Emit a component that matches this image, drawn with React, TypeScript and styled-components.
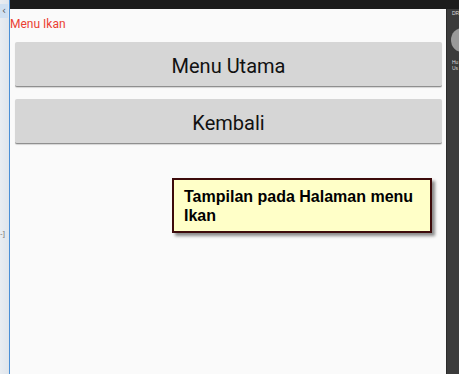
import React from "react";
import styled, { createGlobalStyle } from "styled-components";

const Global = createGlobalStyle`
  html, body { margin: 0; padding: 0; background: #fafafa; }
  body { width: 459px; height: 374px; overflow: hidden; font-family: Roboto, "Liberation Sans", sans-serif; }
`;

const Screen = styled.div`
  position: relative;
  display: flex;
  width: 459px;
  height: 374px;
  overflow: hidden;
`;

const LeftStrip = styled.div`
  position: relative;
  width: 9px;
  flex: none;
  background: linear-gradient(to right, #e9edf2, #dfe5ec);
  border-right: 1px solid #4a8fd6;
  display: flex;
  flex-direction: column;
  align-items: flex-start;
`;

const Chevron = styled.div`
  margin-top: 4px;
  width: 8px;
  height: 14px;
  background: #cfe0f2;
  display: flex;
  align-items: center;
  justify-content: center;
  color: #555;
  font-size: 10px;
  line-height: 1;
  font-family: "DejaVu Sans", sans-serif;
`;

const StripText = styled.div`
  margin-top: 211px;
  color: #777;
  font-size: 8px;
  line-height: 10px;
  font-family: "Liberation Sans", sans-serif;
`;

const Column = styled.div`
  flex: 1;
  display: flex;
  flex-direction: column;
`;

const TopBar = styled.div`
  height: 9px;
  background: #1c1c1c;
  flex: none;
`;

const Body = styled.div`
  flex: 1;
  display: flex;
`;

const Main = styled.div`
  flex: 1;
  background: #fafafa;
  display: flex;
  flex-direction: column;
`;

const Title = styled.div`
  color: #ea3f33;
  font-size: 12px;
  line-height: 14px;
  margin-top: 8px;
  font-family: Roboto, "Liberation Sans", sans-serif;
`;

const ButtonList = styled.div`
  display: flex;
  flex-direction: column;
  gap: 12px;
  margin: 11px 4px 0 5px;
`;

const MenuButton = styled.div`
  height: 45px;
  box-sizing: border-box;
  padding-top: 3px;
  background: #d6d6d6;
  border-bottom: 1px solid #8f8f8f;
  box-shadow: 0 1px 1px rgba(0,0,0,0.15);
  border-radius: 2px;
  display: flex;
  align-items: center;
  justify-content: center;
  font-size: 20px;
  color: #111;
  font-family: Roboto, "Liberation Sans", sans-serif;
`;

const RightPanel = styled.div`
  width: 12px;
  flex: none;
  background: #3b3b3b;
  border-left: 1px solid #2a2a2a;
  display: flex;
  flex-direction: column;
  align-items: flex-start;
  overflow: hidden;
  color: #ddd;
  font-size: 5px;
  font-family: "Liberation Sans", sans-serif;
`;

const Tiny = styled.div<{ $top: number }>`
  margin-top: ${(p) => p.$top}px;
  margin-left: 5px;
  line-height: 5px;
  white-space: nowrap;
`;

const Circle = styled.div`
  margin-top: 12px;
  margin-left: 4px;
  width: 22px;
  height: 24px;
  border-radius: 50%;
  background: #9a9a9a;
  flex: none;
`;

const Callout = styled.div`
  position: absolute;
  left: 172px;
  top: 178px;
  width: 260px;
  height: 55px;
  box-sizing: border-box;
  background: #ffffc8;
  border: 2px solid #3d0b0b;
  box-shadow: 3px 3px 3px rgba(0,0,0,0.45);
  padding: 7px 10px;
  font-family: "Liberation Sans", Arial, sans-serif;
  font-weight: bold;
  font-size: 16px;
  line-height: 19px;
  color: #000;
`;

export default function App() {
  return (
    <>
      <Global />
      <Screen>
        <LeftStrip>
          <Chevron>‹</Chevron>
          <StripText>-]</StripText>
        </LeftStrip>
        <Column>
          <TopBar />
          <Body>
            <Main>
              <Title>Menu Ikan</Title>
              <ButtonList>
                <MenuButton>Menu Utama</MenuButton>
                <MenuButton>Kembali</MenuButton>
              </ButtonList>
            </Main>
            <RightPanel>
              <Tiny $top={2}>DR</Tiny>
              <Circle />
              <Tiny $top={8}>Hu</Tiny>
              <Tiny $top={1}>Us</Tiny>
            </RightPanel>
          </Body>
        </Column>
        <Callout>Tampilan pada Halaman menu Ikan</Callout>
      </Screen>
    </>
  );
}
